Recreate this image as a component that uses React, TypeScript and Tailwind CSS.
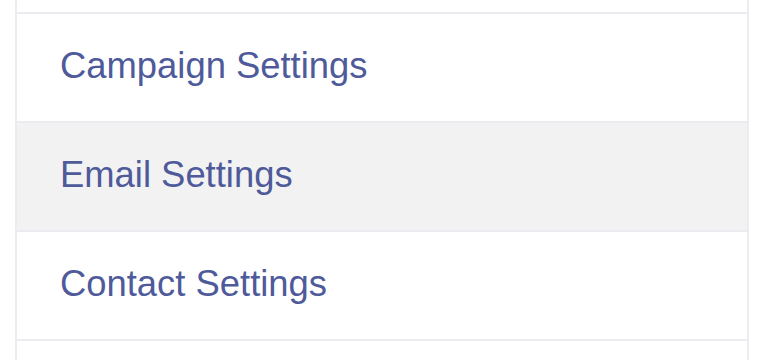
import React from "react";

const items = [
  { label: "Campaign Settings", active: false },
  { label: "Email Settings", active: true },
  { label: "Contact Settings", active: false },
];

export default function App() {
  return (
    <div className="w-[768px] h-[360px] bg-white overflow-hidden" style={{ fontFamily: '"Liberation Sans", Arial, sans-serif' }}>
      <div className="ml-[15px] w-[734px] border-x-2 border-[#ebebf0]">
        <div className="h-[14px] border-b-2 border-[#ebebf0]" />
        {items.map((it) => (
          <div
            key={it.label}
            className={`h-[109px] border-b-2 border-[#ebebf0] flex items-center pl-[43px] pb-[2px] ${it.active ? "bg-[#f2f2f2]" : "bg-white"}`}
          >
            <span className="text-[36.4px] text-[#4e5a9a]">{it.label}</span>
          </div>
        ))}
        <div className="h-[40px]" />
      </div>
    </div>
  );
}
